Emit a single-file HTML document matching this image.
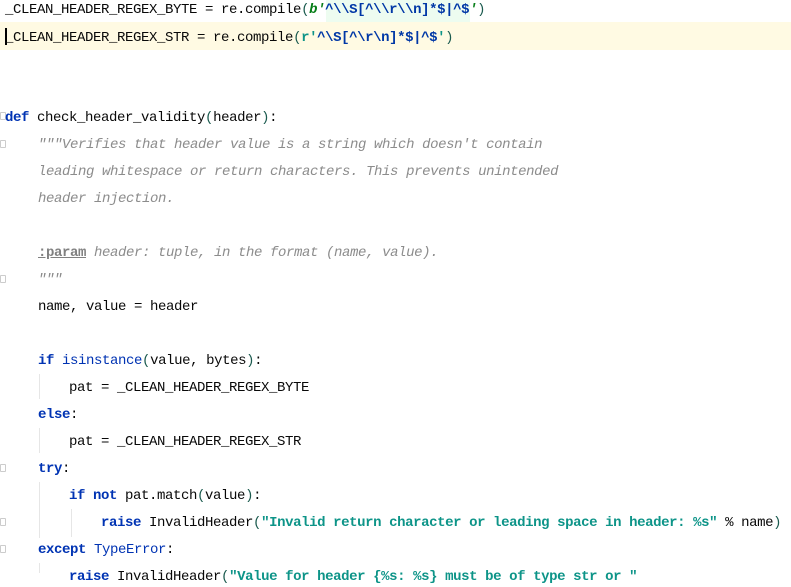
<!DOCTYPE html>
<html><head><meta charset="utf-8"><style>
body{margin:0;width:791px;height:573px;overflow:hidden;background:#fff;position:relative;font-family:"Liberation Mono",monospace;font-size:14px;color:#080808}
.l{position:absolute;white-space:pre;line-height:20px;height:20px;letter-spacing:-0.4px}
.k{color:#0033b3;font-weight:bold}
.f{color:#0033b3}
.s{color:#0d9488;font-weight:bold}
.sb{color:#067d17;font-style:italic;font-weight:bold}
.esc{color:#0037a6;font-weight:bold}
.p{color:#1a5a4e}
.d{color:#8c8c8c;font-style:italic;letter-spacing:-0.4px}
.g{position:absolute;width:1px;background:#e6e6e6}
.m{position:absolute;left:0;width:6px;height:8px;border:1px solid #ccc;border-radius:1px;box-sizing:border-box}
</style></head><body>
<div style="position:absolute;left:0;top:22px;width:791px;height:28px;background:#fffae3"></div>
<div style="position:absolute;left:326px;top:0;width:144px;height:22px;background:#edfcf0"></div>
<div style="position:absolute;left:5px;top:28px;width:2px;height:17px;background:#000"></div>

<div class="g" style="left:39px;top:374px;height:25px"></div>
<div class="g" style="left:39px;top:428px;height:25px"></div>
<div class="g" style="left:39px;top:482px;height:56px"></div>
<div class="g" style="left:71px;top:509px;height:28px"></div>
<div class="g" style="left:39px;top:563px;height:10px"></div>
<div class="m" style="top:112px"></div><div class="m" style="top:140px"></div><div class="m" style="top:275px"></div>
<div class="m" style="top:464px"></div><div class="m" style="top:518px"></div><div class="m" style="top:545px"></div>

<div class="l" style="left:5px;top:0px;letter-spacing:-0.4px">_CLEAN_HEADER_REGEX_BYTE = re.compile<span class="p">(</span><span class="sb">b'</span><span class="esc">^\\S[^\\r\\n]*$|^$</span><span class="sb">'</span><span class="p">)</span></div>
<div class="l" style="left:5px;top:28px;letter-spacing:-0.4px">_CLEAN_HEADER_REGEX_STR = re.compile<span class="p">(</span><span class="s">r'</span><span class="esc">^\S[^\r\n]*$|^$</span><span class="s">'</span><span class="p">)</span></div>
<div class="l" style="left:5px;top:108px"><span class="k">def</span> check_header_validity<span class="p">(</span>header<span class="p">)</span>:</div>
<div class="l d" style="left:38px;top:135px">"""Verifies that header value is a string which doesn't contain</div>
<div class="l d" style="left:38px;top:162px">leading whitespace or return characters. This prevents unintended</div>
<div class="l d" style="left:38px;top:189px">header injection.</div>
<div class="l d" style="left:38px;top:243px"><span style="color:#808080;font-style:normal;font-weight:bold;text-decoration:underline">:param</span> header: tuple, in the format (name, value).</div>
<div class="l d" style="left:38px;top:270px">"""</div>
<div class="l" style="left:38px;top:297px">name, value = header</div>
<div class="l" style="left:38px;top:351px"><span class="k">if</span> <span class="f">isinstance</span><span class="p">(</span>value, bytes<span class="p">)</span>:</div>
<div class="l" style="left:69px;top:378px">pat = _CLEAN_HEADER_REGEX_BYTE</div>
<div class="l" style="left:38px;top:405px"><span class="k">else</span>:</div>
<div class="l" style="left:69px;top:432px">pat = _CLEAN_HEADER_REGEX_STR</div>
<div class="l" style="left:38px;top:459px"><span class="k">try</span>:</div>
<div class="l" style="left:69px;top:486px"><span class="k">if not</span> pat.match<span class="p">(</span>value<span class="p">)</span>:</div>
<div class="l" style="left:101px;top:513px;letter-spacing:-0.4px"><span class="k">raise</span> InvalidHeader<span class="p">(</span><span class="s">"Invalid return character or leading space in header: %s"</span> % name<span class="p">)</span></div>
<div class="l" style="left:38px;top:540px"><span class="k">except</span> <span class="f">TypeError</span>:</div>
<div class="l" style="left:69px;top:567px"><span class="k">raise</span> InvalidHeader<span class="p">(</span><span class="s">"Value for header {%s: %s} must be of type str or "</span></div>
</body></html>
